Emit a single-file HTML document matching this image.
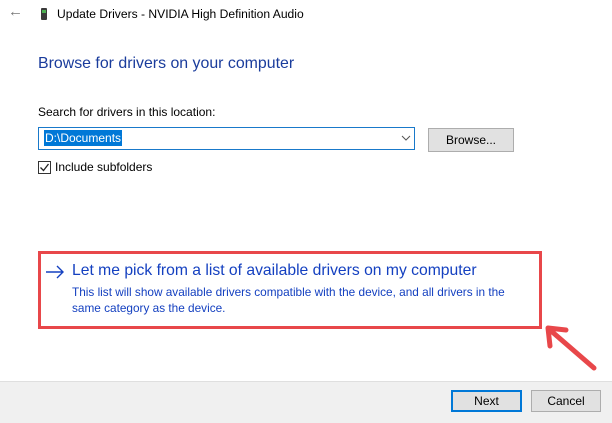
<!DOCTYPE html>
<html><head><style>
body{margin:0;width:612px;height:422px;background:#fff;font-family:"Liberation Sans",sans-serif;position:relative;overflow:hidden;font-size:12px;color:#000}
.a{position:absolute}
.btn{position:absolute;background:#e1e1e1;border:1px solid #adadad;box-sizing:border-box;text-align:center;font-size:12px}
</style></head><body>
<div class="a" style="left:8px;top:3px;color:#777;font-size:15px">&#8592;</div>
<div class="a" style="left:41px;top:8px;width:6px;height:12px;background:#3a3a3a;border-radius:1px"><div style="margin:2px 1px;width:4px;height:3px;background:#4caf50"></div></div>
<div class="a" style="left:57px;top:7px;font-size:12.1px">Update Drivers - NVIDIA High Definition Audio</div>
<div class="a" style="left:38px;top:55px;font-size:15.9px;color:#1a3c9c">Browse for drivers on your computer</div>
<div class="a" style="left:38px;top:105px;font-size:12px">Search for drivers in this location:</div>
<div class="a" style="left:38px;top:127px;width:377px;height:23px;border:1px solid #1979ca;box-sizing:border-box"></div>
<div class="a" style="left:44px;top:130px;height:16px;background:#0078d7;color:#fff;font-size:12px;line-height:16px;padding:0 1px">D:\Documents</div>
<svg class="a" style="left:401px;top:134px" width="10" height="8"><path d="M1 2 L5 6 L9 2" fill="none" stroke="#555" stroke-width="1"/></svg>
<div class="btn" style="left:428px;top:128px;width:86px;height:24px;line-height:22px">Browse...</div>
<div class="a" style="left:38px;top:161px;width:13px;height:13px;border:1px solid #333;box-sizing:border-box"></div>
<svg class="a" style="left:38px;top:161px" width="13" height="13"><path d="M2.5 6.5 L5.5 9.5 L10.5 3" fill="none" stroke="#222" stroke-width="1.3"/></svg>
<div class="a" style="left:55px;top:160px;font-size:12px">Include subfolders</div>
<div class="a" style="left:38px;top:251px;width:504px;height:78px;border:3px solid #e8474a;box-sizing:border-box"></div>
<svg class="a" style="left:45px;top:265px" width="20" height="14"><path d="M1 7 H18 M12 1 L18 7 L12 13" fill="none" stroke="#1440c0" stroke-width="1.4"/></svg>
<div class="a" style="left:72px;top:262px;font-size:15.7px;color:#1440c0">Let me pick from a list of available drivers on my computer</div>
<div class="a" style="left:72px;top:284px;font-size:11.8px;color:#1440c0;line-height:16px;white-space:nowrap">This list will show available drivers compatible with the device, and all drivers in the<br>same category as the device.</div>
<svg class="a" style="left:540px;top:320px" width="60" height="55"><path d="M54 48 L10 10 M8 8 L10 26 M8 8 L26 10" stroke="#e8474a" stroke-width="5" stroke-linecap="round" fill="none"/></svg>
<div class="a" style="left:0;top:381px;width:612px;height:41px;background:#f0f0f0;border-top:1px solid #dfdfdf"></div>
<div class="btn" style="left:451px;top:390px;width:71px;height:22px;border:2px solid #0078d7;line-height:18px">Next</div>
<div class="btn" style="left:531px;top:390px;width:70px;height:22px;line-height:20px">Cancel</div>
</body></html>
